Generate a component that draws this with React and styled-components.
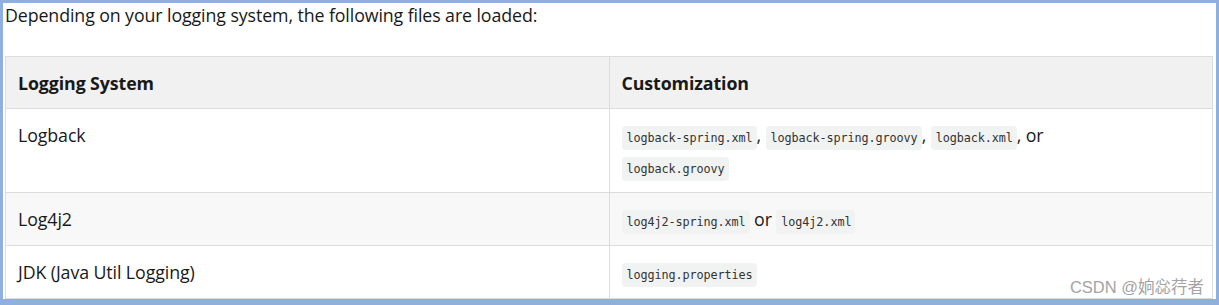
import React from "react";
import styled, { createGlobalStyle } from "styled-components";

const Global = createGlobalStyle`
  html, body { margin: 0; padding: 0; background: #8eafe0; }
  body { font-family: "Open Sans", "Noto Sans", sans-serif; }
`;

const Frame = styled.div`
  box-sizing: border-box;
  width: 1219px;
  height: 305px;
  padding: 3px 3px 6px 3px;
  background: #8eafe0;
`;

const Panel = styled.div`
  position: relative;
  box-sizing: border-box;
  height: 100%;
  background: #fff;
  padding: 0 3px 0 2px;
  color: #191919;
`;

const Intro = styled.p`
  margin: 0 0 30px 0;
  padding-top: 1px;
  font-size: 17.8px;
  line-height: 22px;
  letter-spacing: -0.1px;
`;

const Table = styled.table`
  width: 100%;
  border-collapse: collapse;
  font-size: 17.8px;
  letter-spacing: -0.1px;
`;

const Row = styled.tr`
  background: ${(p) => (p.$shaded ? "#f8f8f8" : "#fff")};
`;

const HeadRow = styled.tr`
  background: #f1f1f1;
`;

const Th = styled.th`
  text-align: left;
  font-weight: 700;
  border: 1px solid #dcdcdc;
  padding: 0 12px;
  height: 52px;
  width: 50%;
  box-sizing: border-box;
`;

const Td = styled.td`
  border: 1px solid #dcdcdc;
  padding: 11px 12px 10px;
  line-height: 31px;
  vertical-align: top;
`;

const Files = styled.div`
  max-width: 520px;
`;

const Code = styled.code`
  font-family: "DejaVu Sans Mono", "Liberation Mono", monospace;
  font-size: 11.8px;
  line-height: 1;
  letter-spacing: -0.1px;
  background: #f1f2f2;
  border-radius: 4px;
  padding: 5px 4px 5px 5px;
  color: #333;
`;

const Watermark = styled.div`
  position: absolute;
  right: 12px;
  bottom: 1px;
  font-family: "Liberation Sans", "Noto Sans CJK SC", sans-serif;
  font-size: 16.5px;
  color: #a3a3a3;
`;

export default function App() {
  return (
    <>
      <Global />
      <Frame>
        <Panel>
          <Intro>Depending on your logging system, the following files are loaded:</Intro>
          <Table>
            <thead>
              <HeadRow>
                <Th>Logging System</Th>
                <Th>Customization</Th>
              </HeadRow>
            </thead>
            <tbody>
              <Row>
                <Td>Logback</Td>
                <Td>
                  <Files>
                    <Code>logback-spring.xml</Code>, <Code>logback-spring.groovy</Code>,{" "}
                    <Code>logback.xml</Code>, or <Code>logback.groovy</Code>
                  </Files>
                </Td>
              </Row>
              <Row $shaded>
                <Td>Log4j2</Td>
                <Td>
                  <Code>log4j2-spring.xml</Code> or <Code>log4j2.xml</Code>
                </Td>
              </Row>
              <Row>
                <Td>JDK (Java Util Logging)</Td>
                <Td>
                  <Code>logging.properties</Code>
                </Td>
              </Row>
            </tbody>
          </Table>
          <Watermark>CSDN @姠惢荇者</Watermark>
        </Panel>
      </Frame>
    </>
  );
}
